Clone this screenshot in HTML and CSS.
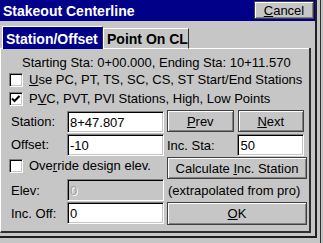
FILE: index.html
```html
<!DOCTYPE html>
<html>
<head>
<meta charset="utf-8">
<link rel="stylesheet" href="styles.css">
</head>
<body>
<div class="screen">
  <div class="window">
    <div class="titlebar">
      <span class="title">Stakeout Centerline</span>
      <div class="btn cancel"><span><u>C</u>ancel</span></div>
    </div>
    <div class="body">
      <div class="tabs">
        <div class="tab-lead"></div>
        <div class="tab active">Station/Offset</div>
        <div class="tab">Point On CL</div>
        <div class="tab-fill"></div>
      </div>
      <div class="panel">
        <div class="info">Starting Sta: 0+00.000, Ending Sta: 10+11.570</div>
        <div class="check-row">
          <span class="box"></span>
          <span><u>U</u>se PC, PT, TS, SC, CS, ST Start/End Stations</span>
        </div>
        <div class="check-row">
          <span class="box"><svg width="10" height="10" viewBox="0 0 10 10"><polyline points="1,4.5 3.5,7 8.5,2" fill="none" stroke="#000" stroke-width="2"/></svg></span>
          <span>P<u>V</u>C, PVT, PVI Stations, High, Low Points</span>
        </div>
        <div class="form">
          <div class="label">Station:</div>
          <div class="field end">8+47.807</div>
          <div class="right pair">
            <div class="btn half"><span><u>P</u>rev</span></div>
            <div class="btn half"><span><u>N</u>ext</span></div>
          </div>

          <div class="label">Offset:</div>
          <div class="field end">-10</div>
          <div class="right inc">
            <span class="inc-label">Inc. Sta:</span>
            <div class="field small end">50</div>
          </div>

          <div class="check-row wide">
            <span class="box"></span>
            <span>Ove<u>r</u>ride design elev.</span>
          </div>
          <div class="right btn full end"><span>Calculate <u>I</u>nc. Station</span></div>

          <div class="label">Elev:</div>
          <div class="field disabled">0</div>
          <div class="right note">(extrapolated from pro)</div>

          <div class="label">Inc. Off:</div>
          <div class="field low">0</div>
          <div class="right btn full ok"><span><u>O</u>K</span></div>
        </div>
      </div>
    </div>
  </div>
</div>
</body>
</html>
```
FILE: styles.css
```css
* { box-sizing: border-box; }
html, body { margin: 0; padding: 0; }
body {
  width: 323px;
  height: 243px;
  overflow: hidden;
  background: #c6c6c6;
  font-family: "Liberation Sans", Arial, sans-serif;
  font-size: 13px;
  font-weight: normal;
  color: #000;
}
.screen {
  width: 321px;
  height: 243px;
  border-right: 1px solid #303030;
}
.window {
  width: 317px;
  height: 238px;
  border-right: 2px solid #202020;
  border-bottom: 2px solid #202020;
  display: flex;
  flex-direction: column;
}
.titlebar {
  height: 21px;
  background: #000088;
  display: flex;
  align-items: center;
  padding-left: 3px;
  padding-right: 1px;
}
.title {
  color: #fff;
  font-weight: bold;
  font-size: 14px;
  flex: 1;
}
.btn {
  background: #c6c6c6;
  border: 1px solid #404040;
  box-shadow: inset 1px 1px #fff, inset -1px -1px #808080;
  display: flex;
  align-items: center;
  justify-content: center;
  height: 22px;
  font-weight: normal;
  white-space: nowrap;
}
.cancel {
  width: 60px;
  height: 18px;
  align-self: flex-start;
  margin-top: 1px;
}
.body {
  width: 311px;
  flex: 1;
  display: flex;
  flex-direction: column;
}
.tabs {
  height: 28px;
  display: flex;
  align-items: flex-end;
}
.tab-lead {
  width: 2px;
  height: 1px;
  background: #fff;
}
.tab {
  height: 21px;
  border-top: 1px solid #fff;
  border-left: 1px solid #fff;
  border-right: 1px solid #303030;
  border-bottom: 1px solid #fff;
  font-weight: bold;
  font-size: 14px;
  padding-left: 3px;
  display: flex;
  align-items: center;
  width: 86px;
  white-space: nowrap;
}
.tab.active {
  height: 23px;
  width: 101px;
  background: #000088;
  color: #fff;
  border-bottom: none;
  padding-left: 3px;
  padding-top: 1px;
}
.tab-fill {
  flex: 1;
  height: 1px;
  background: #fff;
  border-right: 2px solid #303030;
}
.panel {
  flex: 1;
  margin-bottom: 3px;
  border-left: 1px solid #fff;
  border-right: 2px solid #303030;
  border-bottom: 2px solid #303030;
  display: flex;
  flex-direction: column;
}
.info {
  margin-top: 6px;
  padding-left: 21px;
  line-height: 15px;
  height: 15px;
  white-space: nowrap;
}
.check-row {
  height: 19px;
  display: flex;
  align-items: center;
  padding-left: 8px;
  gap: 6px;
  white-space: nowrap;
}
.box {
  width: 14px;
  height: 14px;
  flex: none;
  background: #fff;
  border: 1px solid;
  border-color: #808080 #fff #fff #808080;
  box-shadow: inset 1px 1px #000, inset -1px -1px #c6c6c6;
  display: flex;
  align-items: center;
  justify-content: center;
}
.box svg { display: block; }
.form {
  margin-top: 2px;
  display: grid;
  grid-template-columns: 66px 97px 140px;
  grid-template-rows: 23px 23px 23px 22px 24px;
}
.right { margin-left: 3px; }
.label {
  padding-left: 10px;
  display: flex;
  align-items: center;
  white-space: nowrap;
}
.field {
  height: 22px;
  background: #fff;
  border: 1px solid;
  border-color: #808080 #fff #fff #808080;
  box-shadow: inset 1px 1px #000, inset -1px -1px #c6c6c6;
  padding-left: 2px;
  display: flex;
  align-items: center;
}
.end { align-self: end; }
.low { margin-top: 1px; }
.field.disabled {
  background: #c6c6c6;
  color: #a0a0a0;
  text-shadow: 1px 1px #fff;
}
.pair {
  display: flex;
  gap: 4px;
  height: 22px;
}
.half { flex: 1; }
.inc {
  display: flex;
  align-items: end;
}
.inc-label {
  width: 72px;
  height: 22px;
  display: flex;
  align-items: center;
}
.small { width: 68px; }
.wide {
  grid-column: 1 / span 2;
  padding-left: 8px;
}
.full { width: 140px; }
.note {
  display: flex;
  align-items: center;
  padding-left: 1px;
  white-space: nowrap;
}
.ok {
  margin-top: 1px;
  height: 23px;
}
```
